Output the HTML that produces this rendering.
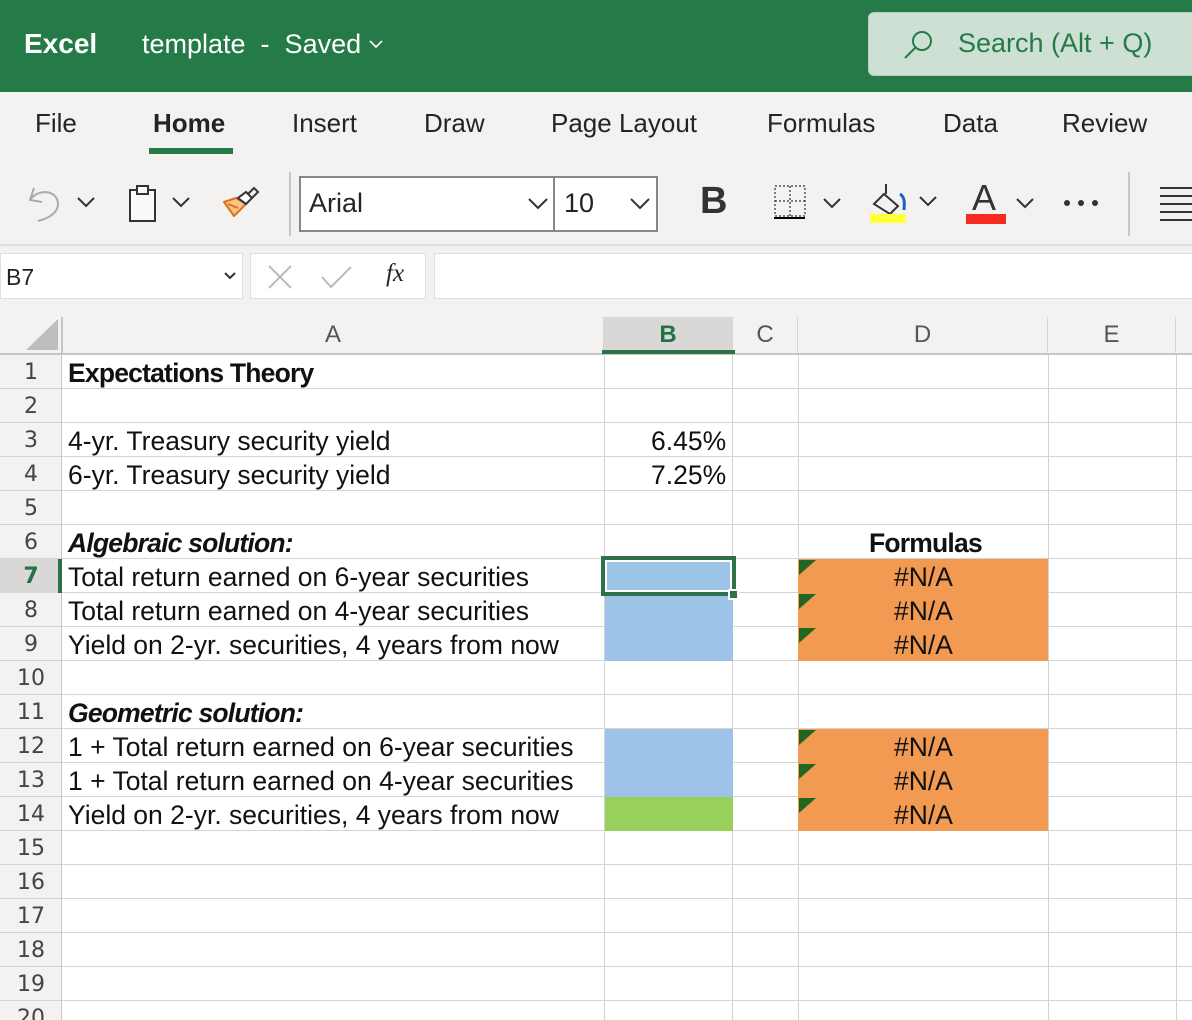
<!DOCTYPE html>
<html><head><meta charset="utf-8"><style>
*{margin:0;padding:0;box-sizing:border-box}
html,body{width:1192px;height:1020px;overflow:hidden}
body{position:relative;background:#f3f2f1;font-family:"Segoe UI","Liberation Sans",sans-serif;color:#252423}
.a{position:absolute}
.hdr{left:0;top:0;width:1192px;height:92px;background:#257b47}
.t{font-family:"Liberation Sans",sans-serif;font-size:26.5px;color:#111;white-space:nowrap}
.rn{position:absolute;left:0;width:62px;height:34px;text-align:center;line-height:36px;color:#444;font-family:"DejaVu Sans","Liberation Sans",sans-serif;font-size:22px}
.ch{position:absolute;top:317px;height:36px;text-align:center;font-size:24px;line-height:36px;color:#555;border-right:1px solid #d4d4d4}
.grid{left:62px;top:355px;width:1130px;height:665px;background:#fff;
background-image:repeating-linear-gradient(to bottom,transparent 0,transparent 33px,#d4d4d4 33px,#d4d4d4 34px)}
.vl{position:absolute;top:355px;width:1px;height:665px;background:#d4d4d4}
.cell{position:absolute;height:33px}
.tri{position:absolute;width:0;height:0;border-top:15px solid #23661f;border-right:17px solid transparent}
</style></head><body>
<div class="a hdr"></div>
<div class="a" style="left:24px;top:28px;font-size:28px;font-weight:600;color:#fff">Excel</div>
<div class="a" style="left:142px;top:29px;font-size:27px;color:#fff">template&nbsp; - &nbsp;Saved</div>
<svg class="a" style="left:368px;top:38px" width="16" height="12"><path d="M2 3l6 6 6-6" stroke="#fff" stroke-width="1.6" fill="none"/></svg>
<div class="a" style="left:868px;top:12px;width:340px;height:64px;background:#cde0d3;border-radius:6px;border:1px solid #b6d2bf"></div>
<svg class="a" style="left:900px;top:28px" width="36" height="32"><circle cx="22" cy="13" r="9" stroke="#257b47" stroke-width="2" fill="none"/><path d="M15 20L5 30" stroke="#257b47" stroke-width="2"/></svg>
<div class="a" style="left:958px;top:28px;font-size:27px;color:#257b47">Search (Alt + Q)</div>
<!-- tabs -->
<div class="a" style="left:35px;top:108px;font-size:26px">File</div>
<div class="a" style="left:153px;top:108px;font-size:26px;font-weight:600">Home</div>
<div class="a" style="left:149px;top:148px;width:84px;height:6px;background:#257b47"></div>
<div class="a" style="left:292px;top:108px;font-size:26px">Insert</div>
<div class="a" style="left:424px;top:108px;font-size:26px">Draw</div>
<div class="a" style="left:551px;top:108px;font-size:26px">Page Layout</div>
<div class="a" style="left:767px;top:108px;font-size:26px">Formulas</div>
<div class="a" style="left:943px;top:108px;font-size:26px">Data</div>
<div class="a" style="left:1062px;top:108px;font-size:26px">Review</div>
<!-- toolbar -->
<svg class="a" style="left:24px;top:180px" width="80" height="48"><path d="M10 8L6 20 18 22M6 20C14 8 34 10 34 24 34 32 26 38 14 41" stroke="#aaa" stroke-width="2" fill="none"/><path d="M54 18l8 8 8-8" stroke="#333" stroke-width="2" fill="none"/></svg>
<svg class="a" style="left:124px;top:180px" width="70" height="48"><rect x="6" y="10" width="25" height="31" stroke="#333" stroke-width="2" fill="#fafafa"/><rect x="13" y="6" width="11" height="8" stroke="#333" stroke-width="2" fill="#fafafa"/><path d="M49 18l8 8 8-8" stroke="#333" stroke-width="2" fill="none"/></svg>
<svg class="a" style="left:220px;top:184px" width="44" height="40"><path d="M4 18L14 32 26 20 16 14Z" fill="#f8c48a" stroke="#e0701b" stroke-width="2" stroke-linejoin="round"/><path d="M8 20L18 24" stroke="#e0701b" stroke-width="2"/><path d="M18 14l8 6 6-6-6-6z" fill="#fff" stroke="#333" stroke-width="2"/><path d="M28 10l6-6 4 4-6 6" stroke="#333" stroke-width="2" fill="none"/></svg>
<div class="a" style="left:289px;top:172px;width:2px;height:64px;background:#c8c6c4"></div>
<div class="a" style="left:299px;top:176px;width:359px;height:56px;background:#fff;border:2px solid #8a8886"></div>
<div class="a" style="left:553px;top:176px;width:2px;height:56px;background:#8a8886"></div>
<div class="a" style="left:309px;top:188px;font-size:27px">Arial</div>
<div class="a" style="left:564px;top:188px;font-size:27px">10</div>
<svg class="a" style="left:526px;top:196px" width="24" height="16"><path d="M3 3l9 9 9-9" stroke="#333" stroke-width="2" fill="none"/></svg>
<svg class="a" style="left:628px;top:196px" width="24" height="16"><path d="M3 3l9 9 9-9" stroke="#333" stroke-width="2" fill="none"/></svg>
<div class="a" style="left:700px;top:180px;font-size:38px;font-weight:700;font-family:'Liberation Sans',sans-serif;color:#333">B</div>
<svg class="a" style="left:774px;top:184px" width="70" height="40"><rect x="1" y="2" width="30" height="30" fill="none" stroke="#333" stroke-width="1.2" stroke-dasharray="2 2"/><path d="M16 2v30M1 17h30" stroke="#333" stroke-width="1.2" stroke-dasharray="2 2"/><path d="M0 34h31" stroke="#000" stroke-width="2"/><path d="M50 15l8 8 8-8" stroke="#333" stroke-width="2" fill="none"/></svg>
<svg class="a" style="left:868px;top:182px" width="76" height="44"><path d="M6 22l10-10 14 12-8 8z" fill="none" stroke="#333" stroke-width="2"/><path d="M18 12V2" stroke="#333" stroke-width="2"/><path d="M32 12c6 4 4 12 4 16" stroke="#1a62c4" stroke-width="3" fill="none"/><rect x="2" y="32" width="36" height="9" fill="#ffff3b"/><path d="M52 15l8 8 8-8" stroke="#333" stroke-width="2" fill="none"/></svg>
<div class="a" style="left:972px;top:177px;font-size:36px;color:#333">A</div>
<div class="a" style="left:966px;top:214px;width:40px;height:10px;background:#f52a20"></div>
<svg class="a" style="left:1014px;top:196px" width="24" height="16"><path d="M3 3l8 8 8-8" stroke="#333" stroke-width="2" fill="none"/></svg>
<svg class="a" style="left:1062px;top:196px" width="40" height="14"><circle cx="5" cy="7" r="3" fill="#333"/><circle cx="19" cy="7" r="3" fill="#333"/><circle cx="33" cy="7" r="3" fill="#333"/></svg>
<div class="a" style="left:1128px;top:172px;width:2px;height:64px;background:#c8c6c4"></div>
<svg class="a" style="left:1160px;top:186px" width="32" height="36"><path d="M0 2h32M0 10h32M0 18h32M0 26h32M0 34h32" stroke="#333" stroke-width="2"/></svg>
<div class="a" style="left:0;top:244px;width:1192px;height:2px;background:#e1dfdd"></div>
<!-- formula bar -->
<div class="a" style="left:0;top:253px;width:243px;height:46px;background:#fff;border:1px solid #e1dfdd"></div>
<div class="a" style="left:6px;top:264px;font-size:23px">B7</div>
<svg class="a" style="left:222px;top:270px" width="16" height="12"><path d="M3 3l5 5 5-5" stroke="#333" stroke-width="2" fill="none"/></svg>
<div class="a" style="left:250px;top:253px;width:176px;height:46px;background:#fff;border:1px solid #e1dfdd"></div>
<svg class="a" style="left:264px;top:262px" width="100" height="30"><path d="M5 4l22 22M27 4L5 26" stroke="#bbb" stroke-width="2"/><path d="M58 15l9 10 20-20" stroke="#bbb" stroke-width="2" fill="none"/></svg>
<div class="a" style="left:386px;top:260px;font-size:25px;font-style:italic;font-family:'Liberation Serif',serif">fx</div>
<div class="a" style="left:434px;top:253px;width:760px;height:46px;background:#fff;border:1px solid #e1dfdd"></div>
<!-- column headers -->
<svg class="a" style="left:24px;top:318px" width="36" height="34"><path d="M34 1V32H2Z" fill="#bdbdbd"/></svg>
<div class="a" style="left:0;top:353px;width:1192px;height:2px;background:#c8c6c4"></div>
<div class="a" style="left:61px;top:317px;width:2px;height:703px;background:#c8c6c4"></div>
<div class="ch" style="left:63px;width:541px">A</div>
<div class="ch" style="left:604px;width:129px;background:#d9d8d6;color:#217346;font-weight:600">B</div>
<div class="a" style="left:602px;top:350px;width:133px;height:4px;background:#2e7148"></div>
<div class="ch" style="left:733px;width:65px">C</div>
<div class="ch" style="left:798px;width:250px">D</div>
<div class="ch" style="left:1048px;width:128px">E</div>
<!-- grid -->
<div class="a grid"></div>
<div class="vl" style="left:604px"></div><div class="vl" style="left:732px"></div><div class="vl" style="left:798px"></div><div class="vl" style="left:1048px"></div><div class="vl" style="left:1176px"></div>
<!-- row numbers -->
<div class="a" style="left:0;top:355px;width:61px;height:665px;background:#f3f2f1;background-image:repeating-linear-gradient(to bottom,transparent 0,transparent 33px,#d4d4d4 33px,#d4d4d4 34px)"></div>
<div class="rn" style="top:355px">1</div><div class="rn" style="top:389px">2</div><div class="rn" style="top:423px">3</div><div class="rn" style="top:457px">4</div><div class="rn" style="top:491px">5</div><div class="rn" style="top:525px">6</div>
<div class="rn" style="top:559px;background:#d9d8d6;color:#217346;font-weight:bold">7</div>
<div class="a" style="left:58px;top:559px;width:4px;height:34px;background:#2e7148"></div>
<div class="rn" style="top:593px">8</div><div class="rn" style="top:627px">9</div><div class="rn" style="top:661px">10</div><div class="rn" style="top:695px">11</div><div class="rn" style="top:729px">12</div><div class="rn" style="top:763px">13</div><div class="rn" style="top:797px">14</div><div class="rn" style="top:831px">15</div><div class="rn" style="top:865px">16</div><div class="rn" style="top:899px">17</div><div class="rn" style="top:933px">18</div><div class="rn" style="top:967px">19</div><div class="rn" style="top:1001px">20</div>
<!-- fills -->
<div class="cell" style="left:605px;top:559px;width:128px;height:102px;background:#9dc3e6"></div>
<div class="cell" style="left:605px;top:729px;width:128px;height:68px;background:#9dc3e6"></div>
<div class="cell" style="left:605px;top:797px;width:128px;height:34px;background:#99d05b"></div>
<div class="cell" style="left:798px;top:559px;width:250px;height:102px;background:#f29a51"></div>
<div class="cell" style="left:798px;top:729px;width:250px;height:102px;background:#f29a51"></div>
<div class="tri" style="left:799px;top:560px"></div><div class="tri" style="left:799px;top:594px"></div><div class="tri" style="left:799px;top:628px"></div>
<div class="tri" style="left:799px;top:730px"></div><div class="tri" style="left:799px;top:764px"></div><div class="tri" style="left:799px;top:798px"></div>
<!-- selection -->
<div class="a" style="left:601px;top:556px;width:135px;height:40px;border:4px solid #2e7148;box-shadow:inset 0 0 0 2px #fff"></div>
<div class="a" style="left:728px;top:589px;width:11px;height:11px;background:#2e7148;border:2px solid #fff"></div>
<!-- text -->
<div class="a t" style="left:68px;top:358px;font-weight:bold;letter-spacing:-0.8px">Expectations Theory</div>
<div class="a t" style="left:68px;top:426px">4-yr. Treasury security yield</div>
<div class="a t" style="left:68px;top:460px">6-yr. Treasury security yield</div>
<div class="a t" style="left:651px;top:426px">6.45%</div>
<div class="a t" style="left:651px;top:460px">7.25%</div>
<div class="a t" style="left:68px;top:528px;font-weight:bold;font-style:italic;letter-spacing:-0.8px">Algebraic solution:</div>
<div class="a t" style="left:869px;top:528px;font-weight:bold;letter-spacing:-0.8px">Formulas</div>
<div class="a t" style="left:68px;top:562px">Total return earned on 6-year securities</div>
<div class="a t" style="left:68px;top:596px">Total return earned on 4-year securities</div>
<div class="a t" style="left:68px;top:630px">Yield on 2-yr. securities, 4 years from now</div>
<div class="a t" style="left:68px;top:698px;font-weight:bold;font-style:italic;letter-spacing:-0.8px">Geometric solution:</div>
<div class="a t" style="left:68px;top:732px">1 + Total return earned on 6-year securities</div>
<div class="a t" style="left:68px;top:766px">1 + Total return earned on 4-year securities</div>
<div class="a t" style="left:68px;top:800px">Yield on 2-yr. securities, 4 years from now</div>
<div class="a t" style="left:894px;top:562px">#N/A</div><div class="a t" style="left:894px;top:596px">#N/A</div><div class="a t" style="left:894px;top:630px">#N/A</div>
<div class="a t" style="left:894px;top:732px">#N/A</div><div class="a t" style="left:894px;top:766px">#N/A</div><div class="a t" style="left:894px;top:800px">#N/A</div>
</body></html>
